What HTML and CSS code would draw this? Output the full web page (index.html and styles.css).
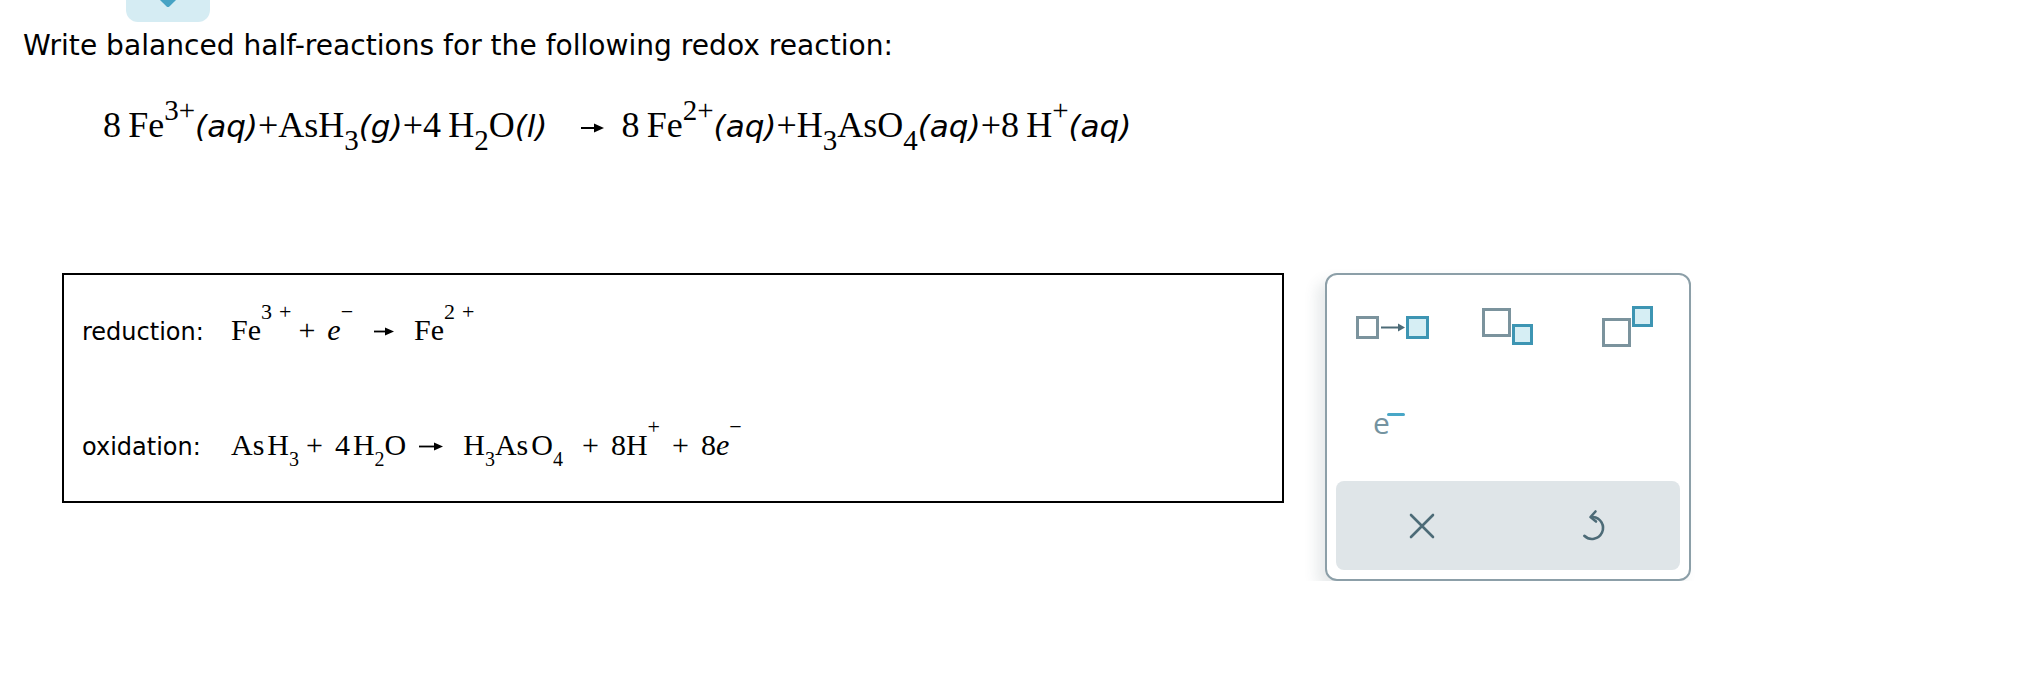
FILE: index.html
```html
<!DOCTYPE html>
<html>
<head>
<meta charset="utf-8">
<link rel="stylesheet" href="styles.css">
</head>
<body>
<div class="tab"><svg class="chev" width="16" height="8" viewBox="0 0 16 8"><path d="M0 0 L6.6 6.4 Q8 7.6 9.4 6.4 L16 0 Z" fill="#47a3c4"/></svg></div>
<p class="question">Write balanced half-reactions for the following redox reaction:</p>
<div class="equation">8&#8201;Fe<sup>3+</sup><i class="st">(aq)</i>+AsH<sub>3</sub><i class="st">(g)</i>+4&#8201;H<sub>2</sub>O<i class="st">(l)</i><span class="arrow"><svg width="24" height="10" viewBox="0 0 24 10"><line x1="0" y1="5" x2="15" y2="5" stroke="#000" stroke-width="2"/><polygon points="13,0.5 23,5 13,9.5" fill="#000"/></svg></span>8&#8201;Fe<sup>2+</sup><i class="st">(aq)</i>+H<sub>3</sub>AsO<sub>4</sub><i class="st">(aq)</i>+8&#8201;H<sup>+</sup><i class="st">(aq)</i></div>
<div class="work">
  <div class="answer">
    <div class="row">
      <span class="label">reduction:</span>
      <span class="math">Fe<sup class="chg">3<span class="sp">+</span></sup><span class="op">+</span><i>e</i><sup class="chg">−</sup><span class="arr"><svg width="20" height="9" viewBox="0 0 20 9"><line x1="0" y1="4.5" x2="12" y2="4.5" stroke="#000" stroke-width="1.8"/><polygon points="11,0.5 20,4.5 11,8.5" fill="#000"/></svg></span>Fe<sup class="chg">2<span class="sp">+</span></sup></span>
    </div>
    <div class="row">
      <span class="label">oxidation:</span>
      <span class="math">As<span class="ls">H</span><sub>3</sub><span class="op">+</span>4<span class="ls">H</span><sub>2</sub>O<span class="arr arr-ox"><svg width="24" height="9" viewBox="0 0 24 9"><line x1="0" y1="4.5" x2="16" y2="4.5" stroke="#000" stroke-width="1.8"/><polygon points="15,0.5 24,4.5 15,8.5" fill="#000"/></svg></span>H<sub>3</sub>As<span class="ls">O</span><sub>4</sub><span class="op wide">+</span>8H<sup class="chg">+</sup><span class="op mid">+</span>8<i>e</i><sup class="chg">−</sup></span>
    </div>
  </div>
  <div class="palette">
    <div class="tools">
      <div class="tool">
        <svg width="74" height="23" viewBox="0 0 74 23"><rect x="1.5" y="1.5" width="20" height="20" fill="#fff" stroke="#7b939d" stroke-width="3"/><line x1="25" y1="11.5" x2="44" y2="11.5" stroke="#4d6b77" stroke-width="2"/><polygon points="42,7.5 49,11.5 42,15.5" fill="#4d6b77"/><rect x="51.5" y="1.5" width="20" height="20" fill="#d6eef4" stroke="#3d95b3" stroke-width="3"/></svg>
      </div>
      <div class="tool">
        <svg width="52" height="38" viewBox="0 0 52 38"><rect x="1.5" y="1.5" width="26" height="26" fill="#fff" stroke="#7b939d" stroke-width="3"/><rect x="31.5" y="17.5" width="18" height="18" fill="#d6eef4" stroke="#3d95b3" stroke-width="3"/></svg>
      </div>
      <div class="tool tool-sup">
        <svg width="52" height="42" viewBox="0 0 52 42"><rect x="1.5" y="13.5" width="26" height="26" fill="#fff" stroke="#7b939d" stroke-width="3"/><rect x="31.5" y="1.5" width="18" height="18" fill="#d6eef4" stroke="#3d95b3" stroke-width="3"/></svg>
      </div>
      <div class="tool"><span class="electron">e<span class="ebar"></span></span></div>
      <div class="tool"></div>
      <div class="tool"></div>
    </div>
    <div class="actions">
      <div class="action"><svg width="26" height="26" viewBox="0 0 26 26"><path d="M2 2 L24 24 M24 2 L2 24" stroke="#4d6b77" stroke-width="2.6" stroke-linecap="round"/></svg></div>
      <div class="action"><svg width="28" height="34" viewBox="0 0 28 34"><path d="M13 8 A11 11 0 1 1 4.3 26.8" fill="none" stroke="#4d6b77" stroke-width="2.6" stroke-linecap="round"/><path d="M15.5 2.5 L10.5 8 L16 12.5" fill="none" stroke="#4d6b77" stroke-width="2.6" stroke-linecap="round" stroke-linejoin="round"/></svg></div>
    </div>
  </div>
</div>
</body>
</html>
```
FILE: styles.css
```css
body {
  margin: 0;
  background: #fff;
  color: #000;
  font-family: "DejaVu Sans", Verdana, sans-serif;
}

.tab {
  margin-left: 126px;
  width: 84px;
  height: 22px;
  background: #d5ecf3;
  border-radius: 0 0 12px 12px;
  display: flex;
  justify-content: center;
}

.chev {
  display: block;
}

.question {
  margin: 7px 0 0 23px;
  font-size: 28.1px;
  line-height: 34px;
}

.equation {
  margin: 39px 0 0 103px;
  font-family: "Liberation Serif", "Times New Roman", serif;
  font-size: 36px;
  line-height: 46px;
  white-space: nowrap;
}

.equation .st {
  font-family: "DejaVu Sans", Verdana, sans-serif;
  font-style: italic;
  font-size: 31px;
}

.equation sup {
  font-size: 29px;
  vertical-align: 17px;
  line-height: 0;
}

.equation sub {
  font-size: 29px;
  vertical-align: -13px;
  line-height: 0;
}

.equation .arrow {
  display: inline-block;
  margin: 0 16px 0 34px;
  vertical-align: 4px;
  line-height: 0;
}

.work {
  display: flex;
  align-items: flex-start;
  gap: 41px;
  margin: 124px 0 0 62px;
}

.answer {
  width: 1222px;
  height: 230px;
  box-sizing: border-box;
  border: 2px solid #000;
  padding: 35px 0 0 18px;
  display: flex;
  flex-direction: column;
  gap: 73px;
}

.row {
  display: flex;
  align-items: baseline;
  font-size: 24px;
  line-height: 40px;
  white-space: nowrap;
}

.label {
  width: 149px;
  flex: none;
}

.math {
  font-family: "Liberation Serif", "Times New Roman", serif;
  font-size: 30px;
}

.math .ls {
  margin-left: 3px;
}

.math sup {
  font-size: 22px;
  vertical-align: 21px;
  line-height: 0;
}

.math sup .sp {
  margin-left: 7px;
}

.math sub {
  font-size: 20px;
  vertical-align: -11px;
  line-height: 0;
}

.math .op {
  margin: 0 12px 0 7px;
}

.math .op.wide {
  margin-left: 19px;
}

.math .op.mid {
  margin-left: 12px;
}

.math .arr {
  display: inline-block;
  margin: 0 20px 0 21px;
  vertical-align: 4px;
  line-height: 0;
}

.math .arr-ox {
  margin-left: 13px;
}

.palette {
  width: 366px;
  height: 308px;
  box-sizing: border-box;
  border: 2px solid #8c9fa8;
  border-radius: 12px;
  background: #fff;
  box-shadow: -8px 8px 14px rgba(60, 80, 90, 0.12);
  padding: 0 9px 9px;
  display: flex;
  flex-direction: column;
}

.tools {
  display: grid;
  grid-template-columns: 1fr 1fr 1fr;
  grid-template-rows: 104px 92px;
  margin-bottom: 10px;
}

.tool {
  display: flex;
  align-items: center;
  justify-content: center;
}

.tool svg {
  display: block;
}

.tool-sup svg {
  margin-left: 10px;
}

.electron {
  position: relative;
  display: block;
  font-family: "Open Sans", "DejaVu Sans", sans-serif;
  font-size: 30px;
  line-height: 30px;
  color: #7493a0;
  padding-right: 16px;
  margin: -4px 8px 0 0;
}

.ebar {
  position: absolute;
  left: 14.5px;
  top: 5px;
  width: 18px;
  height: 3px;
  border-radius: 2px;
  background: #48a7c7;
}

.actions {
  flex: 1;
  display: grid;
  grid-template-columns: 1fr 1fr;
  background: #dfe5e8;
  border-radius: 8px;
}

.action {
  display: flex;
  align-items: center;
  justify-content: center;
}
```
